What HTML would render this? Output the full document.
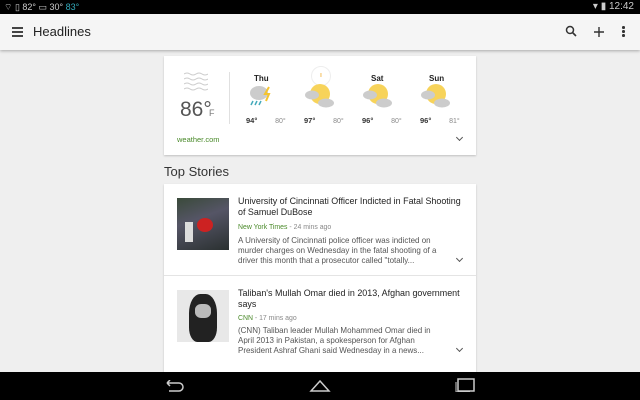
<!DOCTYPE html>
<html><head><style>
*{margin:0;padding:0;box-sizing:border-box}
body{width:640px;height:400px;overflow:hidden;background:#efefef;font-family:"Liberation Sans",sans-serif;position:relative}
.abs{position:absolute}
.sb{left:0;top:0;width:640px;height:14px;background:#000;color:#ccc;font-size:9px}
.ab{left:0;top:14px;width:640px;height:36px;background:#f5f5f5;box-shadow:0 1px 3px rgba(0,0,0,.3)}
.card{background:#fff;box-shadow:0 1px 2px rgba(0,0,0,.2)}
.nav{left:0;top:372px;width:640px;height:28px;background:#000}
.t{font-size:8px;color:#222;font-weight:bold}
.hl{font-size:7.5px;color:#333;font-weight:bold}
.lo{font-size:7px;color:#888}
.title{font-size:9.5px;color:#222;line-height:11px;white-space:nowrap;transform:scaleX(.94);transform-origin:0 0}
.src{font-size:7.5px;color:#888;white-space:nowrap;transform:scaleX(.92);transform-origin:0 0}
.src b{color:#4a8a2a;font-weight:normal}
.body{font-size:8.5px;color:#555;line-height:10px;white-space:nowrap;transform:scaleX(.94);transform-origin:0 0}
.chev{width:5px;height:5px;border-right:1.2px solid #555;border-bottom:1.2px solid #555;transform:rotate(45deg)}
</style></head><body>
<div class="abs sb"><span class="abs" style="left:4px;top:2px">⌔ ▯ 82° ▭ 30° <span style="color:#3ab">83°</span></span><span class="abs" style="right:6px;top:1px;font-size:10px">▾ ▮ 12:42</span></div>
<div class="abs ab">
<div class="abs" style="left:12px;top:13px;width:11px;height:2px;background:#444;box-shadow:0 4px 0 #444,0 8px 0 #444"></div>
<div class="abs" style="left:33px;top:10px;font-size:13px;color:#222">Headlines</div>
<svg class="abs" style="left:565px;top:11px" width="12" height="12"><circle cx="5" cy="5" r="3.5" stroke="#333" stroke-width="1.5" fill="none"/><path d="M7.5 7.5L11 11" stroke="#333" stroke-width="1.6"/></svg>
<svg class="abs" style="left:594px;top:13px" width="10" height="10"><path d="M5 0v10M0 5h10" stroke="#333" stroke-width="1.4"/></svg>
<div class="abs" style="left:622px;top:12px;width:2.5px;height:2.5px;background:#333;border-radius:50%;box-shadow:0 4px 0 #333,0 8px 0 #333"></div>
</div>
<div class="abs card" style="left:164px;top:56px;width:312px;height:99px">
<svg class="abs" style="left:20px;top:16px" width="24" height="22"><g stroke="#ccc" fill="none" stroke-width="1"><path d="M0 2q3-2 6 0t6 0 6 0 6 0M0 7q3-2 6 0t6 0 6 0 6 0M0 12q3-2 6 0t6 0 6 0 6 0M0 17q3-2 6 0t6 0 6 0 6 0"/></g></svg>
<div class="abs" style="left:16px;top:42px;font-size:21px;color:#555">86°</div>
<div class="abs" style="left:45px;top:52px;font-size:9px;color:#777">F</div>
<div class="abs" style="left:65px;top:16px;width:1px;height:52px;background:#e0e0e0"></div>
<div class="abs t" style="left:90px;top:18px">Thu</div>
<div class="abs t" style="left:207px;top:18px">Sat</div>
<div class="abs t" style="left:265px;top:18px">Sun</div>
<div class="abs" style="left:147px;top:10px;width:20px;height:20px;border-radius:50%;border:1px solid #eee;color:#e90;font-size:7px;text-align:center;line-height:18px">ı</div>
<svg class="abs" style="left:84px;top:27px" width="28" height="26"><ellipse cx="11" cy="10" rx="9" ry="7" fill="#ccc"/><path d="M21 4l-4 7h4l-3 7" stroke="#f4c430" stroke-width="2" fill="none"/><path d="M5 18l-2 4M9 18l-2 4M13 18l-2 4" stroke="#4ab" stroke-width="1.5"/></svg>
<svg class="abs" style="left:141px;top:26px" width="30" height="28"><circle cx="15" cy="12" r="10" fill="#f7d35a"/><ellipse cx="7" cy="13" rx="7" ry="4.5" fill="#ccc"/><ellipse cx="21" cy="21" rx="8" ry="4.5" fill="#ccc"/></svg>
<svg class="abs" style="left:199px;top:26px" width="30" height="28"><circle cx="15" cy="12" r="10" fill="#f7d35a"/><ellipse cx="7" cy="13" rx="7" ry="4.5" fill="#ccc"/><ellipse cx="21" cy="21" rx="8" ry="4.5" fill="#ccc"/></svg>
<svg class="abs" style="left:257px;top:26px" width="30" height="28"><circle cx="15" cy="12" r="10" fill="#f7d35a"/><ellipse cx="7" cy="13" rx="7" ry="4.5" fill="#ccc"/><ellipse cx="21" cy="21" rx="8" ry="4.5" fill="#ccc"/></svg>
<div class="abs" style="left:82px;top:54px"><span class="hl">94°</span> &nbsp;&nbsp;&nbsp;<span class="lo">80°</span></div>
<div class="abs" style="left:140px;top:54px"><span class="hl">97°</span> &nbsp;&nbsp;&nbsp;<span class="lo">80°</span></div>
<div class="abs" style="left:198px;top:54px"><span class="hl">96°</span> &nbsp;&nbsp;&nbsp;<span class="lo">80°</span></div>
<div class="abs" style="left:256px;top:54px"><span class="hl">96°</span> &nbsp;&nbsp;&nbsp;<span class="lo">81°</span></div>
<div class="abs" style="left:13px;top:79px;font-size:7.5px;color:#4a8a2a">weather.com</div>
<div class="abs chev" style="left:293px;top:79px"></div>
</div>
<div class="abs" style="left:164px;top:164px;font-size:13px;color:#333">Top Stories</div>
<div class="abs card" style="left:164px;top:184px;width:312px;height:190px">
<div class="abs" style="left:13px;top:14px;width:52px;height:52px;background:linear-gradient(160deg,#3a4a3a,#556 40%,#2a3030);overflow:hidden"><div class="abs" style="left:20px;top:20px;width:16px;height:14px;border-radius:50%;background:#c22"></div><div class="abs" style="left:8px;top:24px;width:8px;height:20px;background:#ddd"></div></div>
<div class="abs title" style="left:74px;top:12px">University of Cincinnati Officer Indicted in Fatal Shooting<br>of Samuel DuBose</div>
<div class="abs src" style="left:74px;top:38px"><b>New York Times</b> - 24 mins ago</div>
<div class="abs body" style="left:74px;top:51px">A University of Cincinnati police officer was indicted on<br>murder charges on Wednesday in the fatal shooting of a<br>driver this month that a prosecutor called "totally...</div>
<div class="abs chev" style="left:293px;top:72px"></div>
<div class="abs" style="left:0;top:91px;width:312px;height:1px;background:#e4e4e4"></div>
<div class="abs" style="left:13px;top:106px;width:52px;height:52px;background:#e8e8e8;overflow:hidden"><div class="abs" style="left:12px;top:4px;width:28px;height:48px;border-radius:40% 40% 30% 30%;background:#222"></div><div class="abs" style="left:18px;top:14px;width:16px;height:14px;background:#bbb;border-radius:40%"></div></div>
<div class="abs title" style="left:74px;top:104px">Taliban's Mullah Omar died in 2013, Afghan government<br>says</div>
<div class="abs src" style="left:74px;top:129px"><b>CNN</b> - 17 mins ago</div>
<div class="abs body" style="left:74px;top:141px">(CNN) Taliban leader Mullah Mohammed Omar died in<br>April 2013 in Pakistan, a spokesperson for Afghan<br>President Ashraf Ghani said Wednesday in a news...</div>
<div class="abs chev" style="left:293px;top:162px"></div>
</div>
<div class="abs nav">
<svg class="abs" style="left:163px;top:8px" width="22" height="12"><path d="M4 3h12a4 4 0 0 1 0 8H6M4 3l3-3M4 3l3 3" stroke="#ccc" stroke-width="1.5" fill="none"/></svg>
<svg class="abs" style="left:309px;top:8px" width="22" height="12"><path d="M2 11L11 1l9 10z" stroke="#ccc" stroke-width="1.5" fill="none"/></svg>
<svg class="abs" style="left:455px;top:6px" width="22" height="14"><rect x="3" y="1" width="16" height="12" stroke="#ccc" stroke-width="1.5" fill="none"/><path d="M1 4v10h14" stroke="#ccc" stroke-width="1" fill="none"/></svg>
</div>
</body></html>
